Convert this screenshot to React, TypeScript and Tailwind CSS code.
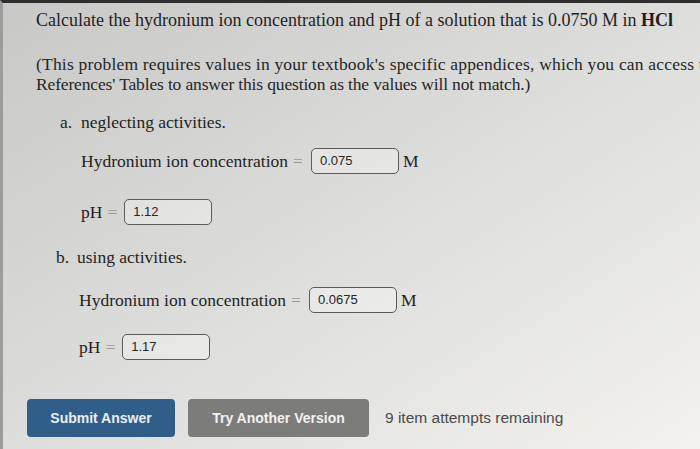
import React from 'react';

const serif = { fontFamily: '"Liberation Serif", "Times New Roman", serif' };
const sans = { fontFamily: '"Liberation Sans", Arial, Helvetica, sans-serif' };

const AnswerBox = ({ value }: { value: string }) => (
  <div
    className="flex h-[26px] w-[88px] items-center rounded-[5px] border-[1.5px] border-[#5b5b5b] bg-white/30 pl-[8px] text-[13px] text-[#262626]"
    style={sans}
  >
    {value}
  </div>
);

const Equals = ({ className }: { className: string }) => (
  <span className={`text-[#9a9a9a] ${className}`}>=</span>
);

type PartProps = {
  letter: string;
  title: string;
  conc: string;
  ph: string;
  indent: string;
  rowIndent: string;
  top: string;
  concTop: string;
  phTop: string;
};

const Part = ({ letter, title, conc, ph, indent, rowIndent, top, concTop, phTop }: PartProps) => (
  <div className={top}>
    <div className={`flex leading-[22px] ${indent}`}>
      <span className="w-[21px]">{letter}</span>
      <span>{title}</span>
    </div>

    <div className={`flex h-[26px] items-center ${rowIndent} ${concTop}`}>
      <span>Hydronium ion concentration</span>
      <Equals className="ml-[5px] mr-[8px]" />
      <AnswerBox value={conc} />
      <span className="ml-[4px]">M</span>
    </div>

    <div className={`flex h-[26px] items-center ${rowIndent} ${phTop}`}>
      <span>pH</span>
      <Equals className="ml-[5px] mr-[7px]" />
      <AnswerBox value={ph} />
    </div>
  </div>
);

export default function App() {
  return (
    <div
      className="relative h-[449px] w-[700px] overflow-hidden border-l-[3px] border-t-[3px] border-l-[#9c9c9c] border-t-[#2e2e2e] bg-gradient-to-br from-[#c8c8c7] via-[#dddddb] to-[#f3f2ee] text-[17.5px] text-[#1f1f1f]"
      style={serif}
    >
      <p className="ml-[33px] mt-[6px] whitespace-nowrap text-[18px] leading-[22px]">
        Calculate the hydronium ion concentration and pH of a solution that is 0.0750 M in <span className="font-bold">HCl</span>
      </p>

      <p className="ml-[33px] mt-[23px] leading-[20px] text-[#262626]">
        <span className="block whitespace-nowrap tracking-[0.2px]">
          (This problem requires values in your textbook's specific appendices, which you can access through the OWLv2 MindTap Reader. You should not use the OWLv2
        </span>
        <span className="block whitespace-nowrap tracking-[-0.15px]">
          References' Tables to answer this question as the values will not match.)
        </span>
      </p>

      <Part
        letter="a."
        title="neglecting activities."
        conc="0.075"
        ph="1.12"
        indent="ml-[57px]"
        rowIndent="ml-[78px]"
        top="mt-[17px]"
        concTop="mt-[15px]"
        phTop="mt-[25px]"
      />

      <Part
        letter="b."
        title="using activities."
        conc="0.0675"
        ph="1.17"
        indent="ml-[53px]"
        rowIndent="ml-[76px]"
        top="mt-[21px]"
        concTop="mt-[19px]"
        phTop="mt-[21px]"
      />

      <div className="ml-[24px] mt-[39px] flex items-center" style={sans}>
        <button className="h-[38px] w-[148px] rounded-[4px] bg-[#2f5e8b] text-[14px] font-bold text-[#e9eef4]">
          Submit Answer
        </button>
        <button className="ml-[13px] h-[38px] w-[181px] rounded-[4px] bg-[#7c7c7b] text-[14px] font-bold text-[#f2f2f2]">
          Try Another Version
        </button>
        <span className="ml-[16px] text-[15.5px] text-[#4a4a4a]">9 item attempts remaining</span>
      </div>
    </div>
  );
}
